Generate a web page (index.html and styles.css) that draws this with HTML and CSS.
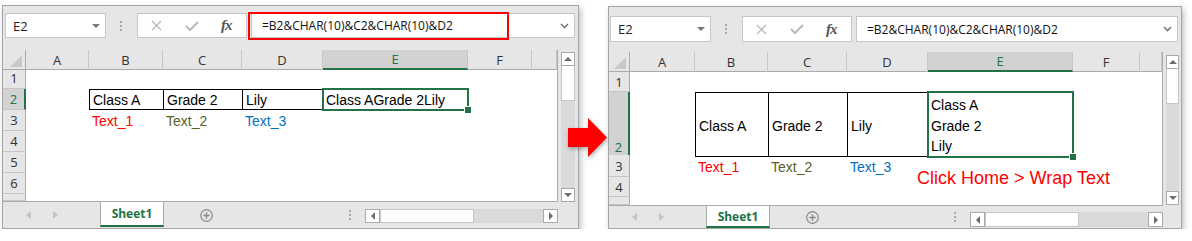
FILE: index.html
```html
<!DOCTYPE html>
<html lang="en">
<head>
    <meta charset="UTF-8">
    <meta name="viewport" content="width=device-width, initial-scale=1.0">
    <title>Combine cells with a line break and Wrap Text</title>
    <link rel="stylesheet" href="styles.css">
</head>
<body>
    <div class="page">
        <!-- Before: the formula result sits on one line -->
        <div class="win win-before">
            <div class="fbar">
                <div class="namebox"><span>E2</span><i class="dd"></i></div>
                <div class="grip"></div>
                <div class="fbtns">
                    <svg class="fb-x" width="11" height="11" viewBox="0 0 11 11"><path d="M1 1L10 10M10 1L1 10" stroke="#b8b8b8" stroke-width="1.3" fill="none"/></svg>
                    <svg class="fb-ok" width="14" height="10" viewBox="0 0 14 10"><path d="M1 5L5 9L13 1" stroke="#b8b8b8" stroke-width="2" fill="none"/></svg>
                    <span class="fb-fx">fx</span>
                </div>
                <div class="finput">
                    <span>=B2&amp;CHAR(10)&amp;C2&amp;CHAR(10)&amp;D2</span>
                    <svg class="chev" width="9" height="6" viewBox="0 0 9 6"><path d="M1 1L4.5 4.5L8 1" stroke="#7a7a7a" stroke-width="1.6" fill="none"/></svg>
                    <div class="hl"></div>
                </div>
            </div>
            <div class="sheet">
                <div class="grid">
                    <div class="row hdr">
                        <div class="corner"></div>
                        <div class="ch">A</div>
                        <div class="ch">B</div>
                        <div class="ch">C</div>
                        <div class="ch">D</div>
                        <div class="ch sel">E</div>
                        <div class="ch">F</div>
                        <div class="ch"></div>
                    </div>
                    <div class="row">
                        <div class="rh">1</div>
                        <div class="c"></div><div class="c"></div><div class="c"></div><div class="c"></div><div class="c"></div><div class="c"></div><div class="c"></div>
                    </div>
                    <div class="row">
                        <div class="rh sel">2</div>
                        <div class="c"></div>
                        <div class="c bd">Class A</div>
                        <div class="c bd">Grade 2</div>
                        <div class="c bd">Lily</div>
                        <div class="c active">Class AGrade 2Lily</div>
                        <div class="c"></div><div class="c"></div>
                    </div>
                    <div class="row">
                        <div class="rh">3</div>
                        <div class="c"></div>
                        <div class="c t-red">Text_1</div>
                        <div class="c t-olive">Text_2</div>
                        <div class="c t-blue">Text_3</div>
                        <div class="c"></div><div class="c"></div><div class="c"></div>
                    </div>
                    <div class="row">
                        <div class="rh">4</div>
                        <div class="c"></div><div class="c"></div><div class="c"></div><div class="c"></div><div class="c"></div><div class="c"></div><div class="c"></div>
                    </div>
                    <div class="row">
                        <div class="rh">5</div>
                        <div class="c"></div><div class="c"></div><div class="c"></div><div class="c"></div><div class="c"></div><div class="c"></div><div class="c"></div>
                    </div>
                    <div class="row">
                        <div class="rh">6</div>
                        <div class="c"></div><div class="c"></div><div class="c"></div><div class="c"></div><div class="c"></div><div class="c"></div><div class="c"></div>
                    </div>
                    <div class="row rp">
                        <div class="rh"></div>
                        <div class="c"></div><div class="c"></div><div class="c"></div><div class="c"></div><div class="c"></div><div class="c"></div><div class="c"></div>
                    </div>
                </div>
                <div class="vscroll">
                    <div class="vbtn up"></div>
                    <div class="vtrack"><div class="vthumb"></div></div>
                    <div class="vbtn down"></div>
                </div>
            </div>
            <div class="tabs">
                <div class="nav"><i class="prev"></i><i class="next"></i></div>
                <div class="tab">Sheet1</div>
                <svg class="add" width="13" height="13" viewBox="0 0 13 13"><circle cx="6.5" cy="6.5" r="5.8" stroke="#8a8a8a" stroke-width="1.2" fill="none"/><path d="M6.5 3.3V9.7M3.3 6.5H9.7" stroke="#8a8a8a" stroke-width="1.4"/></svg>
                <div class="spacer"></div>
                <div class="tgrip"></div>
                <div class="hscroll">
                    <div class="hbtn left"></div>
                    <div class="hthumb"></div>
                    <div class="htrack"></div>
                    <div class="hbtn right"></div>
                </div>
            </div>
        </div>

        <svg class="arrow" width="46" height="46" viewBox="0 0 46 46"><polygon points="4,14 24,14 24,4 43,23.5 24,43 24,33 4,33" fill="#ff0000"/></svg>

        <!-- After: Wrap Text turned on for E2 -->
        <div class="win win-after">
            <div class="fbar">
                <div class="namebox"><span>E2</span><i class="dd"></i></div>
                <div class="grip"></div>
                <div class="fbtns">
                    <svg class="fb-x" width="11" height="11" viewBox="0 0 11 11"><path d="M1 1L10 10M10 1L1 10" stroke="#b8b8b8" stroke-width="1.3" fill="none"/></svg>
                    <svg class="fb-ok" width="14" height="10" viewBox="0 0 14 10"><path d="M1 5L5 9L13 1" stroke="#b8b8b8" stroke-width="2" fill="none"/></svg>
                    <span class="fb-fx">fx</span>
                </div>
                <div class="finput">
                    <span>=B2&amp;CHAR(10)&amp;C2&amp;CHAR(10)&amp;D2</span>
                    <svg class="chev" width="9" height="6" viewBox="0 0 9 6"><path d="M1 1L4.5 4.5L8 1" stroke="#7a7a7a" stroke-width="1.6" fill="none"/></svg>
                </div>
            </div>
            <div class="sheet">
                <div class="grid">
                    <div class="row hdr">
                        <div class="corner"></div>
                        <div class="ch">A</div>
                        <div class="ch">B</div>
                        <div class="ch">C</div>
                        <div class="ch">D</div>
                        <div class="ch sel">E</div>
                        <div class="ch">F</div>
                        <div class="ch"></div>
                    </div>
                    <div class="row">
                        <div class="rh">1</div>
                        <div class="c"></div><div class="c"></div><div class="c"></div><div class="c"></div><div class="c"></div><div class="c"></div><div class="c"></div>
                    </div>
                    <div class="row r2">
                        <div class="rh sel">2</div>
                        <div class="c"></div>
                        <div class="c bd">Class A</div>
                        <div class="c bd">Grade 2</div>
                        <div class="c bd">Lily</div>
                        <div class="c active wrap">Class A<br>Grade 2<br>Lily</div>
                        <div class="c"></div><div class="c"></div>
                    </div>
                    <div class="row r3">
                        <div class="rh">3</div>
                        <div class="c"></div>
                        <div class="c t-red">Text_1</div>
                        <div class="c t-olive">Text_2</div>
                        <div class="c t-blue">Text_3</div>
                        <div class="c"></div><div class="c"></div><div class="c"></div>
                    </div>
                    <div class="row">
                        <div class="rh">4</div>
                        <div class="c"></div><div class="c"></div><div class="c"></div><div class="c"></div><div class="c"></div><div class="c"></div><div class="c"></div>
                    </div>
                    <div class="row rp">
                        <div class="rh"></div>
                        <div class="c"></div><div class="c"></div><div class="c"></div><div class="c"></div><div class="c"></div><div class="c"></div><div class="c"></div>
                    </div>
                    <div class="note">Click Home &gt; Wrap Text</div>
                </div>
                <div class="vscroll">
                    <div class="vbtn up"></div>
                    <div class="vtrack"><div class="vthumb"></div></div>
                    <div class="vbtn down"></div>
                </div>
            </div>
            <div class="tabs">
                <div class="nav"><i class="prev"></i><i class="next"></i></div>
                <div class="tab">Sheet1</div>
                <svg class="add" width="13" height="13" viewBox="0 0 13 13"><circle cx="6.5" cy="6.5" r="5.8" stroke="#8a8a8a" stroke-width="1.2" fill="none"/><path d="M6.5 3.3V9.7M3.3 6.5H9.7" stroke="#8a8a8a" stroke-width="1.4"/></svg>
                <div class="spacer"></div>
                <div class="tgrip"></div>
                <div class="hscroll">
                    <div class="hbtn left"></div>
                    <div class="hthumb"></div>
                    <div class="htrack"></div>
                    <div class="hbtn right"></div>
                </div>
            </div>
        </div>
    </div>
</body>
</html>
```

FILE: styles.css
```css
* {
    box-sizing: border-box;
}

body {
    margin: 0;
    background-color: #fff;
    font-family: "Open Sans", "Noto Sans", sans-serif;
    color: #333;
}

.page {
    position: relative;
    display: flex;
    align-items: flex-start;
    gap: 29px;
    padding-left: 2px;
}

/* Excel window */
.win {
    display: flex;
    flex-direction: column;
    background-color: #e6e6e6;
    border: 1px solid #a5a5a5;
    box-shadow: 2px 3px 6px rgba(0, 0, 0, 0.25);
}

.win-before {
    width: 577px;
    margin-top: 5px;
    --cols: 23px 63px 74px 79px 81px 145px 64px 25px;
    --rh: 21px;
    --hh: 18px;
    --vs: 20px;
}

.win-after {
    width: 574px;
    margin-top: 6px;
    --cols: 21px 65px 73px 79px 81px 145px 67px 22px;
    --rh: 20px;
    --hh: 20px;
    --vs: 18px;
}

/* Formula bar */
.fbar {
    display: flex;
    align-items: center;
    padding: 7px 3px 12px 2px;
}

.win-after .fbar {
    padding: 9px 3px 10px 1px;
}

.namebox,
.fbtns,
.finput {
    display: flex;
    align-items: center;
    height: 25px;
    background-color: #fff;
    border: 1px solid #c6c6c6;
}

.win-after .namebox,
.win-after .fbtns,
.win-after .finput {
    height: 26px;
}

.namebox {
    width: 101px;
    justify-content: space-between;
    padding: 0 5px 0 7px;
    font-size: 13px;
    color: #222;
}

.dd {
    border-left: 4px solid transparent;
    border-right: 4px solid transparent;
    border-top: 4px solid #777;
}

.grip,
.tgrip {
    width: 2px;
    height: 10px;
    background-image: linear-gradient(#a8a8a8 2px, transparent 2px);
    background-size: 2px 4px;
}

.grip {
    margin: 0 15px 0 14px;
}

.fbtns {
    width: 110px;
}

.fb-x {
    margin-left: 13px;
}

.fb-ok {
    margin-left: 23px;
}

.fb-fx {
    margin-left: 22px;
    font-family: "Liberation Serif", serif;
    font-style: italic;
    font-weight: 700;
    font-size: 15px;
    color: #555;
    letter-spacing: -1px;
}

.finput {
    position: relative;
    flex: 1;
    margin-left: 4px;
    justify-content: space-between;
    padding: 0 5px 0 10px;
    font-size: 12px;
    color: #111;
}

/* Red box round the formula */
.hl {
    position: absolute;
    left: -4px;
    top: -2px;
    width: 261px;
    height: 28px;
    border: 2px solid #ff0000;
}

/* Sheet grid */
.sheet {
    display: flex;
}

.grid {
    position: relative;
    background-color: #fff;
    border-right: 1px solid #ababab;
    border-bottom: 1px solid #ababab;
}

.row {
    display: grid;
    grid-template-columns: var(--cols);
    height: var(--rh);
}

.hdr {
    height: var(--hh);
}

.win-after .r2 {
    height: 63px;
}

.win-after .r3 {
    height: 22px;
}

.win-before .rp {
    height: 7px;
}

.win-after .rp {
    height: 8px;
}

.corner {
    position: relative;
    background-color: #e6e6e6;
    border-right: 1px solid #ababab;
    border-bottom: 1px solid #ababab;
}

.corner::after {
    content: '';
    position: absolute;
    right: 3px;
    bottom: 2px;
    border-left: 12px solid transparent;
    border-bottom: 12px solid #c8c8c8;
}

.ch {
    display: flex;
    align-items: center;
    justify-content: center;
    background-color: #e6e6e6;
    border-right: 1px solid #c6c6c6;
    border-bottom: 1px solid #ababab;
    font-size: 13px;
    color: #333;
}

.ch.sel {
    background-color: #d2d2d2;
    color: #217346;
    border-bottom: 2px solid #217346;
}

.rh {
    display: flex;
    align-items: center;
    justify-content: center;
    background-color: #e6e6e6;
    border-right: 1px solid #ababab;
    border-bottom: 1px solid #c6c6c6;
    font-size: 13px;
    color: #333;
}

.rh.sel {
    background-color: #d2d2d2;
    color: #217346;
    border-right: 2px solid #217346;
}

.win-after .r2 .rh {
    align-items: flex-end;
}

.c {
    display: flex;
    align-items: center;
    padding: 1px 0 0 3px;
    font-family: "Liberation Sans", Arial, sans-serif;
    font-size: 14px;
    color: #000;
    white-space: nowrap;
}

.win-after .r2 .c {
    padding-top: 3px;
}

.bd {
    border-top: 1px solid #000;
    border-left: 1px solid #000;
    border-bottom: 1px solid #000;
}

.active {
    position: relative;
}

.active::after {
    content: '';
    position: absolute;
    left: -1px;
    top: -1px;
    right: -1px;
    bottom: -1px;
    border: 2px solid #217346;
}

.active::before {
    content: '';
    position: absolute;
    right: -4px;
    bottom: -4px;
    width: 6px;
    height: 6px;
    background-color: #217346;
    border: 1px solid #fff;
    z-index: 1;
}

.wrap {
    align-items: flex-start;
    line-height: 20.5px;
}

.t-red {
    color: #ff0000;
}

.t-olive {
    color: #566226;
}

.t-blue {
    color: #0070c0;
}

.note {
    position: absolute;
    left: 308px;
    top: 115px;
    font-family: "Liberation Sans", Arial, sans-serif;
    font-size: 18px;
    line-height: 22px;
    color: #ff0000;
    white-space: nowrap;
}

/* Vertical scroll bar */
.vscroll {
    width: var(--vs);
    display: flex;
    flex-direction: column;
    padding: 2px 3px 0 3px;
}

.win-after .vscroll {
    padding: 3px 2px 1px 3px;
}

.vtrack {
    flex: 1;
    background-color: #dadada;
}

.vthumb {
    height: 35px;
    background-color: #fff;
    border: 1px solid #c6c6c6;
    border-top: none;
}

.vbtn,
.hbtn {
    position: relative;
    flex-shrink: 0;
    background-color: #fff;
    border: 1px solid #ababab;
}

.vbtn {
    height: 14px;
}

.vbtn::after,
.hbtn::after {
    content: '';
    position: absolute;
    left: 50%;
    top: 50%;
    transform: translate(-50%, -50%);
}

.up::after {
    border-left: 4px solid transparent;
    border-right: 4px solid transparent;
    border-bottom: 4px solid #6d6d6d;
}

.down::after {
    border-left: 4px solid transparent;
    border-right: 4px solid transparent;
    border-top: 4px solid #6d6d6d;
}

/* Sheet tabs and horizontal scroll */
.tabs {
    display: flex;
    height: 26px;
}

.win-after .tabs {
    height: 22px;
}

.nav {
    width: 97px;
    display: flex;
    align-items: center;
    gap: 22px;
    padding-left: 23px;
}

.prev {
    border-top: 4px solid transparent;
    border-bottom: 4px solid transparent;
    border-right: 5px solid #c4c4c4;
}

.next {
    border-top: 4px solid transparent;
    border-bottom: 4px solid transparent;
    border-left: 5px solid #c4c4c4;
}

.tab {
    width: 64px;
    height: 25px;
    display: flex;
    align-items: center;
    justify-content: center;
    background-color: #fff;
    border-left: 1px solid #ababab;
    border-right: 1px solid #ababab;
    border-bottom: 2px solid #217346;
    font-size: 12px;
    font-weight: 700;
    color: #217346;
}

.win-after .tab {
    height: 22px;
}

.add {
    align-self: center;
    margin-left: 36px;
}

.spacer {
    flex: 1;
}

.tgrip {
    align-self: center;
    margin-right: 14px;
}

.hscroll {
    width: 193px;
    height: 14px;
    display: flex;
    margin-top: 7px;
    margin-right: var(--vs);
    background-color: #dadada;
}

.win-after .hscroll {
    height: 15px;
    margin-top: 6px;
}

.hbtn {
    width: 15px;
}

.hthumb {
    width: 94px;
    background-color: #fff;
    border: 1px solid #c6c6c6;
}

.htrack {
    flex: 1;
}

.left::after {
    border-top: 4px solid transparent;
    border-bottom: 4px solid transparent;
    border-right: 4px solid #6d6d6d;
}

.right::after {
    border-top: 4px solid transparent;
    border-bottom: 4px solid transparent;
    border-left: 4px solid #6d6d6d;
}

/* Red arrow between the two windows */
.arrow {
    position: absolute;
    left: 564px;
    top: 114px;
    filter: drop-shadow(1px 2px 2px rgba(0, 0, 0, 0.3));
}
```
